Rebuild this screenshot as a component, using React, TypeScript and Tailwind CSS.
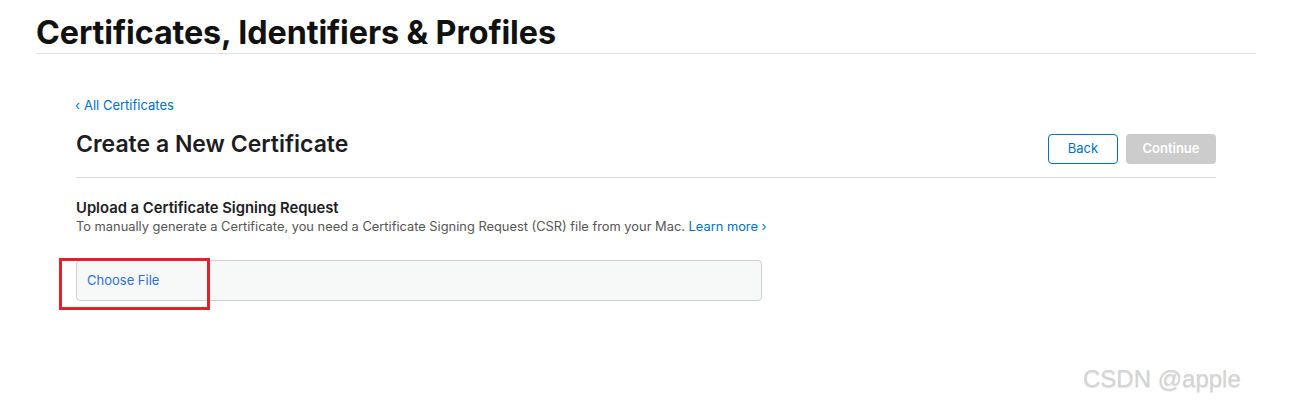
import React from 'react';

const font = { fontFamily: 'Inter, "Noto Sans", sans-serif' };

export default function App() {
  return (
    <div className="relative w-[1303px] h-[401px] bg-white overflow-hidden" style={font}>
      {/* Page header */}
      <div className="ml-[36px] w-[1220px] h-[54px] border-b border-[#e2e2e2]">
        <h1 className="pt-[13px] text-[32.3px] leading-[40px] font-bold tracking-[-0.1px] text-[#111]">
          Certificates, Identifiers &amp; Profiles
        </h1>
      </div>

      {/* Content */}
      <div className="ml-[76px] w-[1140px] pt-[43px]">
        <a className="flex items-center gap-[4px] text-[13px] leading-[16px] text-[#0070c9] -ml-[1px]">
          <span>‹</span>
          <span>All Certificates</span>
        </a>

        <div className="flex items-start justify-between h-[53px] mt-[12px] border-b border-[#dcdcdc]">
          <h2 className="text-[23px] leading-[30px] font-semibold text-[#1d1d1f] mt-[4px]">
            Create a New Certificate
          </h2>
          <div className="flex gap-[8px] mt-[9px]">
            <button className="w-[70px] h-[30px] rounded-[4px] border border-[#0070c9] text-[13px] text-[#0070c9]">
              Back
            </button>
            <button className="w-[90px] h-[30px] rounded-[4px] bg-[#cccccc] text-[13px] font-semibold text-white">
              Continue
            </button>
          </div>
        </div>

        <div className="pt-[20px]">
          <h3 className="text-[14.8px] leading-[20px] font-semibold text-[#1d1d1f]">
            Upload a Certificate Signing Request
          </h3>
          <p className="text-[12.85px] leading-[18px] text-[#555]">
            To manually generate a Certificate, you need a Certificate Signing Request (CSR) file from your Mac.{' '}
            <a className="text-[#0070c9]">Learn more ›</a>
          </p>
        </div>

        <div className="mt-[24px] w-[686px] h-[41px] rounded-[4px] border border-[#cfcfcf] bg-[#f7f8f8] flex items-center px-[10px]">
          <span className="text-[13px] text-[#2d6fd2]">Choose File</span>
        </div>
      </div>

      {/* Annotation box */}
      <div className="absolute left-[59px] top-[258px] w-[151px] h-[52px] border-[3px] border-[#e3212b]" />

      {/* Watermark */}
      <div
        className="absolute left-[1083px] top-[364px] text-[24px] leading-[30px] text-[#d4d4d4]"
        style={{ fontFamily: '"Liberation Sans", Arial, sans-serif', textShadow: '0 1px 1px rgba(0,0,0,0.12)' }}
      >
        CSDN @apple
      </div>
    </div>
  );
}
